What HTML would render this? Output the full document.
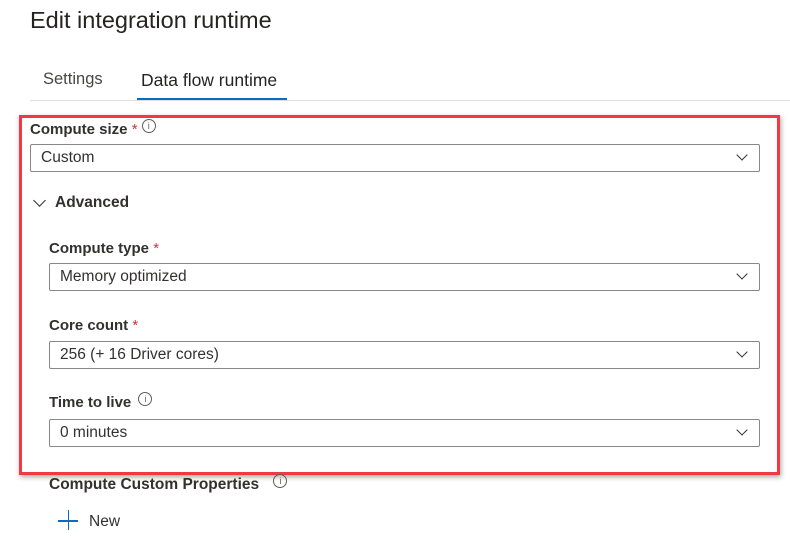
<!DOCTYPE html>
<html><head><style>
body{margin:0;width:790px;height:546px;background:#fff;font-family:"Liberation Sans",sans-serif;color:#323130;position:relative;overflow:hidden}
.a{position:absolute;white-space:nowrap}
.lbl{font-size:15px;font-weight:bold;color:#323130}
.req{color:#d13438;font-weight:normal}
.box{position:absolute;border:1px solid #8a8886;border-radius:2px;height:28px;box-sizing:border-box;font-size:15.5px;line-height:26px;padding-left:10px;color:#323130}
.chev{position:absolute;right:13px;top:6px;width:7px;height:7px;border-right:1px solid #323130;border-bottom:1px solid #323130;transform:rotate(45deg)}
.info{display:inline-block;width:12px;height:12px;border:1px solid #605e5c;border-radius:50%;font-size:9px;line-height:12px;text-align:center;color:#605e5c;font-weight:normal;vertical-align:top;margin-top:-2px}
</style></head><body>
<div class="a" style="left:30px;top:7px;font-size:23.5px;color:#252423">Edit integration runtime</div>
<div class="a" style="left:43px;top:70px;font-size:16.5px;color:#484644">Settings</div>
<div class="a" style="left:141px;top:70px;font-size:17.5px;color:#252423">Data flow runtime</div>
<div class="a" style="left:30px;top:100px;width:760px;height:1px;background:#e1dfdd"></div>
<div class="a" style="left:137px;top:98px;width:150px;height:2px;background:#0f6cbd"></div>

<div class="a" style="left:19px;top:115px;width:761px;height:360px;box-sizing:border-box;border:3px solid #f03a3f;box-shadow:1px 2px 5px rgba(0,0,0,.35)"></div>

<div class="a lbl" style="left:30px;top:121px">Compute size <span class="req">*</span> <span class="info">i</span></div>
<div class="box" style="left:30px;top:144px;width:730px">Custom<span class="chev"></span></div>

<div class="a" style="left:35px;top:196px;width:8px;height:8px;border-right:1.2px solid #323130;border-bottom:1.2px solid #323130;transform:rotate(45deg)"></div>
<div class="a lbl" style="left:55px;top:194px;font-size:15.5px">Advanced</div>

<div class="a lbl" style="left:49px;top:240px">Compute type <span class="req">*</span></div>
<div class="box" style="left:49px;top:263px;width:711px">Memory optimized<span class="chev"></span></div>

<div class="a lbl" style="left:49px;top:317px">Core count <span class="req">*</span></div>
<div class="box" style="left:49px;top:341px;width:711px">256 (+ 16 Driver cores)<span class="chev"></span></div>

<div class="a lbl" style="left:49px;top:394px">Time to live <span class="info" style="margin-left:3px">i</span></div>
<div class="box" style="left:49px;top:419px;width:711px">0 minutes<span class="chev"></span></div>

<div class="a lbl" style="left:49px;top:476px;font-size:15.5px">Compute Custom Properties <span class="info" style="margin-left:10px">i</span></div>
<div class="a" style="left:58px;top:520px;width:20px;height:1.5px;background:#0f6cbd"></div>
<div class="a" style="left:67.5px;top:510px;width:1.5px;height:20px;background:#0f6cbd"></div>
<div class="a" style="left:89px;top:513px;font-size:15.5px;color:#323130">New</div>
</body></html>
